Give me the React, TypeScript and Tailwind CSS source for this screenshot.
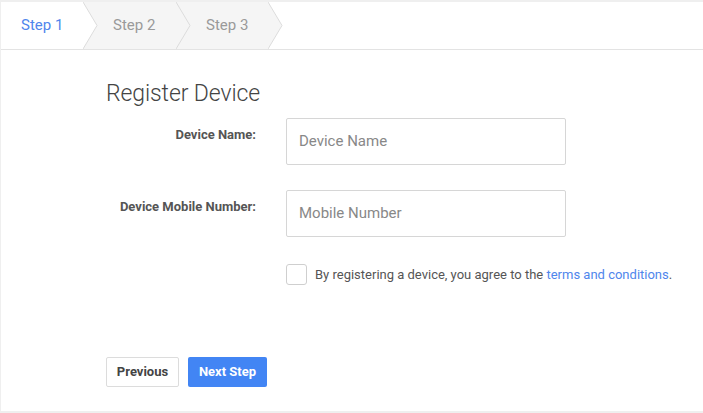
import React from "react";

function Arrow({ fill }: { fill: string }) {
  return (
    <svg
      className="absolute left-full top-0"
      width="15"
      height="47"
      viewBox="0 0 15 47"
    >
      <polygon points="0,0 14,23.5 0,47" fill={fill} />
      <polyline points="0,0 14,23.5 0,47" fill="none" stroke="#dcdcdc" strokeWidth="1" />
    </svg>
  );
}

export default function App() {
  return (
    <div
      className="w-[703px] h-[413px] bg-[#efefef] pt-[2px] pl-[1px] pb-[2px]"
      style={{ fontFamily: "Roboto, 'Noto Sans', sans-serif" }}
    >
      <div className="h-[409px] bg-white flex flex-col">
        <div className="h-[48px] border-b border-[#e3e3e3] flex">
          <div className="relative z-30 w-[82px] h-[47px] bg-white flex items-center pl-[20px] text-[15px] text-[#4f86ec]">
            Step 1
            <Arrow fill="#ffffff" />
          </div>
          <div className="relative z-20 w-[93px] h-[47px] bg-[#f5f5f5] flex items-center pl-[30px] text-[15px] text-[#9a9a9a]">
            Step 2
            <Arrow fill="#f5f5f5" />
          </div>
          <div className="relative z-10 w-[92px] h-[47px] bg-[#f5f5f5] flex items-center pl-[30px] text-[15px] text-[#9a9a9a]">
            Step 3
            <Arrow fill="#f5f5f5" />
          </div>
        </div>

        <div className="pl-[105px] pt-[30px]">
          <h1 className="text-[23px] leading-[28px] font-light text-[#444] tracking-[-0.1px]">
            Register Device
          </h1>

          <div className="mt-[10px] flex flex-col gap-[25px]">
            <div className="flex">
              <label className="w-[150px] text-right pt-[9px] text-[13px] leading-[16px] font-bold text-[#555]">
                Device Name:
              </label>
              <div className="ml-[30px] w-[280px] h-[47px] border border-[#d6d6d6] rounded-[2px] flex items-center pl-[12px] text-[15px] text-[#888]">
                Device Name
              </div>
            </div>
            <div className="flex">
              <label className="w-[150px] text-right pt-[9px] text-[13px] leading-[16px] font-bold text-[#555]">
                Device Mobile Number:
              </label>
              <div className="ml-[30px] w-[280px] h-[47px] border border-[#d6d6d6] rounded-[2px] flex items-center pl-[12px] text-[15px] text-[#888]">
                Mobile Number
              </div>
            </div>
          </div>

          <div className="mt-[27px] ml-[180px] flex items-center gap-[8px]">
            <div className="w-[21px] h-[21px] border border-[#cfcfcf] rounded-[3px] bg-white" />
            <span className="text-[13px] text-[#555]">
              By registering a device, you agree to the{" "}
              <span className="text-[#4f86ec]">terms and conditions</span>.
            </span>
          </div>

          <div className="mt-[72px] flex gap-[9px]">
            <button className="w-[73px] h-[30px] border border-[#dcdcdc] rounded-[2px] bg-white text-[13px] font-bold text-[#444]">
              Previous
            </button>
            <button className="w-[79px] h-[30px] rounded-[2px] bg-[#4285f4] text-[13px] font-bold text-white">
              Next Step
            </button>
          </div>
        </div>
      </div>
    </div>
  );
}
